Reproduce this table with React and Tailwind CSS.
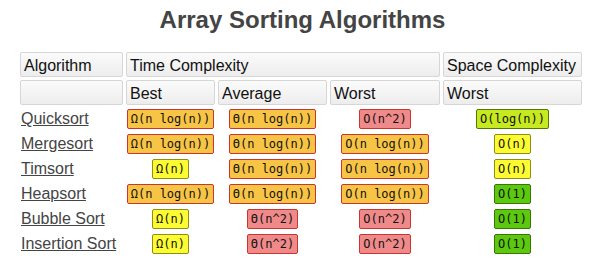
import React from "react";

const styles = {
  orange: "bg-[#f8c446] border-[#c8372f]",
  red: "bg-[#f08a8a] border-[#c8372f]",
  yellow: "bg-[#fdfc33] border-[#8f8c1a]",
  yg: "bg-[#c7e91f] border-[#4f7a06]",
  green: "bg-[#5cc90e] border-[#3a7606]",
};

const rows = [
  ["Quicksort", ["Ω(n log(n))", "orange"], ["Θ(n log(n))", "orange"], ["O(n^2)", "red"], ["O(log(n))", "yg"]],
  ["Mergesort", ["Ω(n log(n))", "orange"], ["Θ(n log(n))", "orange"], ["O(n log(n))", "orange"], ["O(n)", "yellow"]],
  ["Timsort", ["Ω(n)", "yellow"], ["Θ(n log(n))", "orange"], ["O(n log(n))", "orange"], ["O(n)", "yellow"]],
  ["Heapsort", ["Ω(n log(n))", "orange"], ["Θ(n log(n))", "orange"], ["O(n log(n))", "orange"], ["O(1)", "green"]],
  ["Bubble Sort", ["Ω(n)", "yellow"], ["Θ(n^2)", "red"], ["O(n^2)", "red"], ["O(1)", "green"]],
  ["Insertion Sort", ["Ω(n)", "yellow"], ["Θ(n^2)", "red"], ["O(n^2)", "red"], ["O(1)", "green"]],
];

function Head({ children, className = "" }) {
  return (
    <div
      className={
        "h-[25px] border border-[#d6d6d6] rounded-[2px] bg-gradient-to-b from-[#fbfbfb] to-[#ededed] pl-[3px] pt-[4px] text-[16px] leading-[18px] text-[#111] whitespace-nowrap overflow-hidden " +
        className
      }
    >
      {children}
    </div>
  );
}

function Badge({ text, kind }) {
  return (
    <span
      className={
        "inline-block h-[20px] border rounded-[2px] px-[3px] text-[12px] leading-[18px] text-[#111] whitespace-pre " +
        styles[kind]
      }
      style={{ fontFamily: '"DejaVu Sans Mono", monospace' }}
    >
      {text}
    </span>
  );
}

export default function App() {
  return (
    <div
      className="w-[605px] h-[258px] bg-white overflow-hidden"
      style={{ fontFamily: '"Liberation Sans", Arial, sans-serif' }}
    >
      <h1 className="pt-[6px] text-center text-[24px] leading-[28px] font-bold text-[#444]">
        Array Sorting Algorithms
      </h1>
      <div className="mt-[18px] ml-[20px] grid grid-cols-[103px_89px_109px_110px_139px] gap-[3px]">
        <Head>Algorithm</Head>
        <Head className="col-span-3">Time Complexity</Head>
        <Head>Space Complexity</Head>
        <Head></Head>
        <Head>Best</Head>
        <Head>Average</Head>
        <Head>Worst</Head>
        <Head>Worst</Head>
        {rows.map(([name, ...cells]) => (
          <React.Fragment key={name}>
            <div className="h-[22px] flex items-center pl-[1px] text-[16px] leading-[18px] whitespace-nowrap">
              <a href="#" className="text-[#444] underline">
                {name}
              </a>
            </div>
            {cells.map(([t, k], i) => (
              <div key={i} className="h-[22px] flex items-center justify-center">
                <Badge text={t} kind={k} />
              </div>
            ))}
          </React.Fragment>
        ))}
      </div>
    </div>
  );
}
